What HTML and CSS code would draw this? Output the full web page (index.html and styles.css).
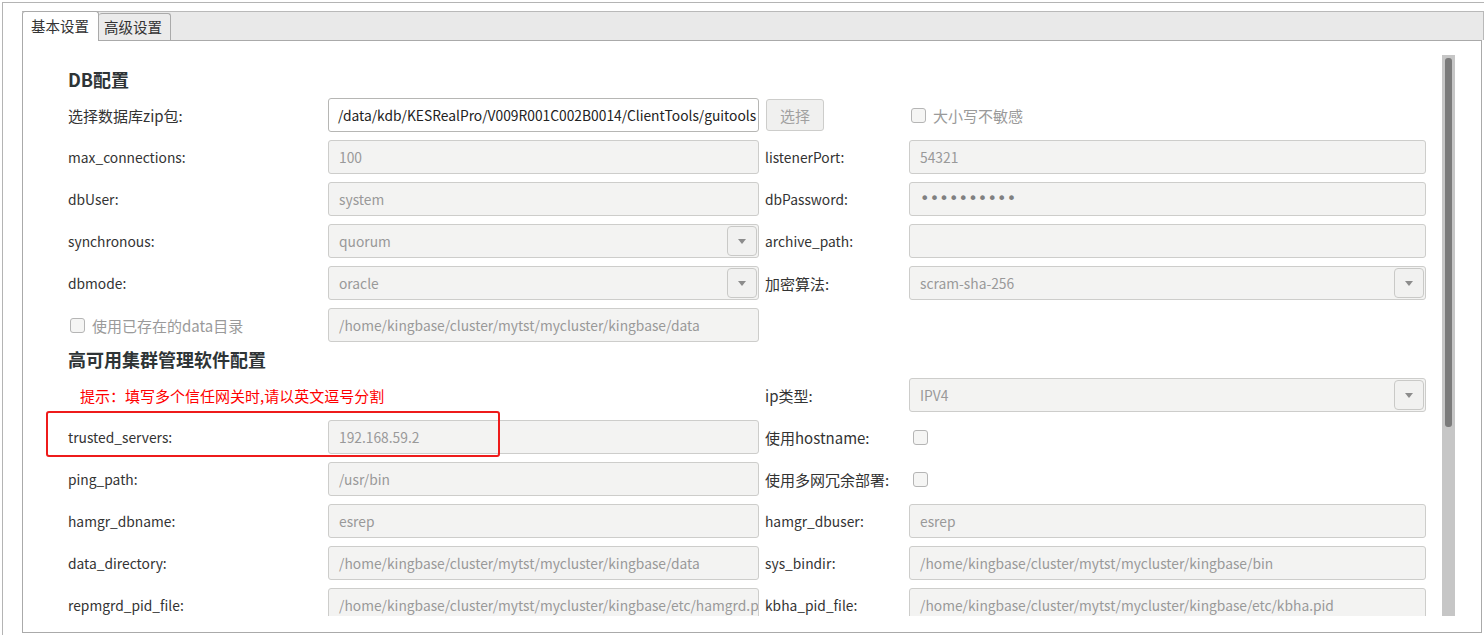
FILE: index.html
```html
<!DOCTYPE html>
<html lang="zh-CN">
<head>
    <title>基本设置</title>
    <meta charset="utf-8"/>
    <link rel="stylesheet" href="styles.css">
</head>
<body>
<div class="window">
    <div class="tab-bar">
        <div class="tab active">基本设置</div>
        <div class="tab">高级设置</div>
    </div>
    <div class="panel">
        <div class="viewport">
            <div class="form">
                <h3 class="section">DB配置</h3>

                <div class="row">
                    <span class="label cjk">选择数据库zip包:</span>
                    <div class="input editable">/data/kdb/KESRealPro/V009R001C002B0014/ClientTools/guitools</div>
                    <div class="cell"><button class="btn">选择</button></div>
                    <label class="check muted"><span class="box"></span>大小写不敏感</label>
                </div>
                <div class="row">
                    <span class="label">max_connections:</span>
                    <div class="input">100</div>
                    <span class="label right">listenerPort:</span>
                    <div class="input">54321</div>
                </div>
                <div class="row">
                    <span class="label">dbUser:</span>
                    <div class="input">system</div>
                    <span class="label right">dbPassword:</span>
                    <div class="input dots">••••••••••</div>
                </div>
                <div class="row">
                    <span class="label">synchronous:</span>
                    <div class="input select">quorum<span class="drop"></span></div>
                    <span class="label right">archive_path:</span>
                    <div class="input"></div>
                </div>
                <div class="row">
                    <span class="label">dbmode:</span>
                    <div class="input select">oracle<span class="drop"></span></div>
                    <span class="label right cjk">加密算法:</span>
                    <div class="input select">scram-sha-256<span class="drop"></span></div>
                </div>
                <div class="row">
                    <label class="check muted first"><span class="box"></span>使用已存在的data目录</label>
                    <div class="input">/home/kingbase/cluster/mytst/mycluster/kingbase/data</div>
                </div>

                <h3 class="section">高可用集群管理软件配置</h3>

                <div class="row">
                    <span class="hint">提示：填写多个信任网关时,请以英文逗号分割</span>
                    <span class="label right cjk">ip类型:</span>
                    <div class="input select">IPV4<span class="drop"></span></div>
                </div>
                <div class="row">
                    <span class="label">trusted_servers:</span>
                    <div class="input">192.168.59.2</div>
                    <span class="label right cjk">使用hostname:</span>
                    <div class="cell"><span class="box solo"></span></div>
                </div>
                <div class="row">
                    <span class="label">ping_path:</span>
                    <div class="input">/usr/bin</div>
                    <span class="label right cjk">使用多网冗余部署:</span>
                    <div class="cell"><span class="box solo"></span></div>
                </div>
                <div class="row">
                    <span class="label">hamgr_dbname:</span>
                    <div class="input">esrep</div>
                    <span class="label right">hamgr_dbuser:</span>
                    <div class="input">esrep</div>
                </div>
                <div class="row">
                    <span class="label">data_directory:</span>
                    <div class="input">/home/kingbase/cluster/mytst/mycluster/kingbase/data</div>
                    <span class="label right">sys_bindir:</span>
                    <div class="input">/home/kingbase/cluster/mytst/mycluster/kingbase/bin</div>
                </div>
                <div class="row">
                    <span class="label">repmgrd_pid_file:</span>
                    <div class="input">/home/kingbase/cluster/mytst/mycluster/kingbase/etc/hamgrd.pid</div>
                    <span class="label right">kbha_pid_file:</span>
                    <div class="input">/home/kingbase/cluster/mytst/mycluster/kingbase/etc/kbha.pid</div>
                </div>
            </div>

            <div class="scrollbar"><div class="thumb"></div></div>

            <!-- 标注框 -->
            <div class="mark"></div>
        </div>
    </div>
</div>
</body>
</html>
```

FILE: styles.css
```css
body {
    margin: 0;
    background: #fff;
    font-family: "Noto Sans CJK SC", sans-serif;
    font-size: 15px;
    color: #333;
    overflow: hidden;
}

.window {
    margin: 2px 0 0 2px;
    height: 640px;
    border-left: 1px solid #b4b4b4;
    border-top: 1px solid #b4b4b4;
    padding: 8px 0 0 19px;
}

/* 标签页 */
.tab-bar {
    display: flex;
    align-items: flex-end;
    height: 29px;
    box-sizing: border-box;
    background: #e9e9e9;
    border-top: 1px solid #b9b9b9;
    border-right: 1px solid #b9b9b9;
}

.tab {
    height: 27px;
    line-height: 26px;
    padding: 0 8px 0 5px;
    background: #ebebeb;
    border: 1px solid #aaa;
    border-bottom: none;
    border-left: none;
    border-radius: 3px 3px 0 0;
    box-sizing: border-box;
    font-size: 14.5px;
    color: #333;
}

.tab.active {
    height: 30px;
    margin-bottom: -1px;
    line-height: 28px;
    width: 77px;
    padding-left: 8px;
    background: #fff;
    border-left: 1px solid #aaa;
    position: relative;
    z-index: 1;
}

.panel {
    height: 593px;
    width: 1460px;
    box-sizing: border-box;
    border: 1px solid #aaa;
    background: #fff;
    padding-top: 14px;
}

.viewport {
    position: relative;
    display: flex;
    height: 561px;
    overflow: hidden;
}

.form {
    width: 1419px;
    padding: 11px 0 0 45px;
    box-sizing: border-box;
}

.section {
    margin: 0;
    height: 28px;
    line-height: 26px;
    font-size: 18px;
    font-weight: bold;
    color: #2e3436;
}

.row {
    display: grid;
    grid-template-columns: 260px 431px 150px 517px;
    height: 42px;
    align-items: center;
}

.label {
    white-space: nowrap;
    font-size: 13.8px;
}

.label.cjk {
    font-size: 15px;
}

.label.right {
    padding-left: 6px;
}

.input {
    position: relative;
    height: 34px;
    line-height: 32px;
    box-sizing: border-box;
    padding: 0 10px;
    background: #f3f3f2;
    border: 1px solid #cdcdcb;
    border-radius: 3px;
    color: #999;
    font-size: 13.8px;
    white-space: nowrap;
    overflow: hidden;
}

.input.editable {
    background: #fff;
    border-color: #b6b6b4;
    color: #222;
    padding-left: 9px;
}

.input.dots {
    font-family: "DejaVu Sans", sans-serif;
    font-size: 16px;
    letter-spacing: 0.2px;
    color: #808080;
}

.drop {
    position: absolute;
    top: 1px;
    right: 1px;
    width: 28px;
    height: 28px;
    border: 1px solid #c9c9c7;
    border-radius: 4px;
    background: #f1f1f0;
}

.drop::after {
    content: "";
    position: absolute;
    left: 10px;
    top: 12px;
    border-left: 4px solid transparent;
    border-right: 4px solid transparent;
    border-top: 5px solid #8c8c8c;
}

.btn {
    margin-left: 7px;
    width: 58px;
    height: 32px;
    padding: 0;
    font: inherit;
    color: #a0a0a0;
    background: #f0f0ef;
    border: 1px solid #cdcdcb;
    border-radius: 3px;
}

.check {
    display: flex;
    align-items: center;
    gap: 7px;
    padding-left: 2px;
    white-space: nowrap;
}

.muted {
    color: #9a9a9a;
}

.box {
    display: inline-block;
    width: 15px;
    height: 15px;
    box-sizing: border-box;
    border: 1px solid #b5b5b5;
    border-radius: 3px;
    background: #f5f5f4;
}

.box.solo {
    margin-left: 4px;
    vertical-align: middle;
}

.cell {
    display: flex;
    align-items: center;
}

.hint {
    grid-column: 1 / 3;
    padding-left: 12px;
    color: #f00;
    font-size: 15px;
}

/* 滚动条 */
.scrollbar {
    width: 13px;
    height: 561px;
    background: #c6c6c6;
    padding-top: 3px;
    box-sizing: border-box;
}

.thumb {
    margin: 0 auto;
    width: 7px;
    height: 369px;
    background: #7b7b7b;
    border-radius: 3px;
}

.mark {
    position: absolute;
    left: 23px;
    top: 356px;
    width: 454px;
    height: 46px;
    box-sizing: border-box;
    border: 2px solid #ee1b1b;
    border-radius: 3px;
}
```
